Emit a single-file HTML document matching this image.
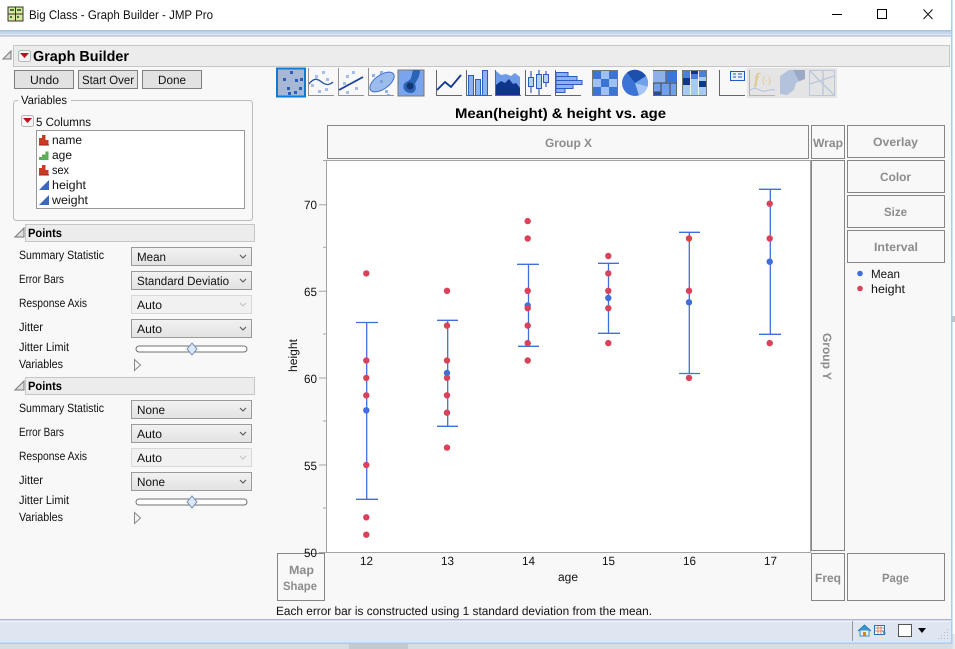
<!DOCTYPE html>
<html><head><meta charset="utf-8"><title>Big Class - Graph Builder - JMP Pro</title>
<style>
html,body{margin:0;padding:0;background:#fff;overflow:hidden}
svg{display:block}
text{font-family:"Liberation Sans",sans-serif;font-size:12px;fill:#111;text-rendering:geometricPrecision}
.b{font-weight:bold;fill:#8c8c8c}
.h{font-weight:bold;fill:#000}
.r{fill:#d9435a}.m{fill:#3f6fdc}
.box{fill:#f8f8f8;stroke:#868686;stroke-width:1}
.dd{fill:url(#dd);stroke:#9a9a9a}
.dis{fill:#f1f1f1;stroke:#d8d8d8}
.e{stroke:#3f6fdc;stroke-width:1.3;fill:none}
.ic{fill:#fff;stroke:none}
.ax{stroke:#666;fill:none}
.blue1{fill:#8db2ee;stroke:#2c5cc0}
.sq{fill:#6f97dc}
</style></head><body>
<svg width="955" height="649" viewBox="0 0 955 649" xmlns="http://www.w3.org/2000/svg">
<defs>
<linearGradient id="dd" x1="0" y1="0" x2="0" y2="1"><stop offset="0" stop-color="#f2f2f2"/><stop offset="1" stop-color="#e2e2e2"/></linearGradient>
<g id="nom"><path d="M0 10V3h3v7zM3 10V0h3.5v10zM6.500 10V5h3v5z" fill="#c93a22"/><path d="M0 10h10" stroke="#8e2615"/></g>
<g id="ord"><path d="M0 10V7h3v3zM3 10V4.500h3.500V10zM6.500 10V1.500h3V10z" fill="#5cad55"/></g>
<g id="con"><path d="M0 10L10 0v10z" fill="#3b68b8"/></g>
<g id="redbtn"><rect x=".5" y=".5" width="12" height="11" rx="2" fill="#f4f4f4" stroke="#b5b5b5"/><path d="M2 3h9l-4.500 5z" fill="#c00c1a"/></g>
<path id="chev" d="M0 0l3 3 3-3" fill="none" stroke="#555" stroke-width="1.100"/>
<g id="slider"><rect x="136" y="-3" width="111" height="6" rx="3" fill="#fff" stroke="#707070"/><path d="M192 -6l5 6-5 6-5-6z" fill="#dbe8f8" stroke="#7a93b8"/></g>
</defs>

<rect width="955" height="649" fill="#fff"/>
<!-- window body -->
<rect x="0" y="30" width="952" height="614" fill="#f8f8f8"/>
<rect x="0" y="30" width="952" height="1.500" fill="#a8c4e4"/>
<rect x="0" y="31.500" width="952" height="2.500" fill="#c5d8ee"/>
<rect x="0" y="34" width="952" height="1.500" fill="#dfe7f2"/>
<rect x="0" y="35.500" width="952" height="1" fill="#a9b6cc"/>
<rect x="951" y="0" width="1.500" height="644" fill="#a6cdf3"/>
<rect x="952.500" y="316" width="2.500" height="6" fill="#c4c4c4"/>
<rect x="0" y="644" width="955" height="5" fill="#dcdcdc"/>
<rect x="349" y="644" width="59" height="5" fill="#c9c9c9"/>
<rect x="952.500" y="634" width="2.500" height="15" fill="#e8e8e8"/>

<!-- title bar -->
<rect x="8" y="7" width="15" height="14" fill="#d9e59a" stroke="#333"/>
<path d="M8 14h15M15.500 7v14" stroke="#333"/>
<path d="M10 10h4M17 10h4M10 17h2M17 17h2" stroke="#3b7a3b" stroke-width="2"/>
<text x="29" y="19" textLength="184" lengthAdjust="spacingAndGlyphs" style="font-size:12.500px">Big Class - Graph Builder - JMP Pro</text>
<path d="M832 14.500h10" stroke="#000"/>
<rect x="877.500" y="9.500" width="9" height="9" fill="none" stroke="#000"/>
<path d="M923.500 9.500l9 9.500M932.500 9.500l-9 9.500" stroke="#111" fill="none"/>

<!-- header -->
<rect x="13.500" y="45.500" width="936" height="21" fill="#ececec" stroke="#c6c6c6"/>
<path d="M11 51v8H3z" fill="#dedede" stroke="#777"/>
<use href="#redbtn" x="18" y="50"/>
<text x="33" y="61" class="h" textLength="96" lengthAdjust="spacingAndGlyphs" style="font-size:14.500px">Graph Builder</text>

<!-- buttons -->
<rect x="14.500" y="70.500" width="59" height="18" fill="#e2e2e2" stroke="#808080"/>
<rect x="78.500" y="70.500" width="59" height="18" fill="#e2e2e2" stroke="#808080"/>
<rect x="142.500" y="70.500" width="59" height="18" fill="#e2e2e2" stroke="#808080"/>
<text x="30" y="84" textLength="29" lengthAdjust="spacingAndGlyphs">Undo</text>
<text x="82" y="84" textLength="52" lengthAdjust="spacingAndGlyphs">Start Over</text>
<text x="158" y="84" textLength="28" lengthAdjust="spacingAndGlyphs">Done</text>

<!-- variables -->
<rect x="13.500" y="100.500" width="239" height="120" rx="3" fill="#f8f8f8" stroke="#bcbcbc"/>
<rect x="18" y="95" width="53" height="10" fill="#f8f8f8"/>
<text x="21" y="104" textLength="46" lengthAdjust="spacingAndGlyphs">Variables</text>
<use href="#redbtn" x="21" y="115"/>
<text x="36" y="126" textLength="55" lengthAdjust="spacingAndGlyphs">5 Columns</text>
<rect x="36.500" y="130.500" width="208" height="78" fill="#fff" stroke="#999"/>
<use href="#nom" x="39" y="135"/><text x="52" y="144" textLength="30" lengthAdjust="spacingAndGlyphs">name</text>
<use href="#ord" x="39" y="150"/><text x="52" y="159" textLength="20" lengthAdjust="spacingAndGlyphs">age</text>
<use href="#nom" x="39" y="165"/><text x="52" y="174" textLength="17" lengthAdjust="spacingAndGlyphs">sex</text>
<use href="#con" x="39" y="180"/><text x="52" y="189" textLength="34" lengthAdjust="spacingAndGlyphs">height</text>
<use href="#con" x="39" y="195"/><text x="52" y="204" textLength="36" lengthAdjust="spacingAndGlyphs">weight</text>

<!-- points 1 -->
<path d="M24 228v9h-9z" fill="#dedede" stroke="#777"/>
<rect x="25.500" y="224.500" width="229" height="17" fill="#ececec" stroke="#c6c6c6"/>
<text x="28" y="237" class="h" textLength="34" lengthAdjust="spacingAndGlyphs">Points</text>
<text x="19" y="259" textLength="85" lengthAdjust="spacingAndGlyphs">Summary Statistic</text>
<text x="19" y="283" textLength="45" lengthAdjust="spacingAndGlyphs">Error Bars</text>
<text x="19" y="307" textLength="68" lengthAdjust="spacingAndGlyphs">Response Axis</text>
<text x="19" y="331" textLength="24" lengthAdjust="spacingAndGlyphs">Jitter</text>
<text x="19" y="351" textLength="50" lengthAdjust="spacingAndGlyphs">Jitter Limit</text>
<text x="19" y="368" textLength="44" lengthAdjust="spacingAndGlyphs">Variables</text>
<rect x="131.500" y="247.500" width="120" height="18" class="dd"/>
<rect x="131.500" y="271.500" width="120" height="18" class="dd"/>
<rect x="131.500" y="295.500" width="120" height="18" class="dis"/>
<rect x="131.500" y="319.500" width="120" height="18" class="dd"/>
<text x="137" y="261" textLength="29" lengthAdjust="spacingAndGlyphs">Mean</text>
<text x="137" y="285" textLength="92" lengthAdjust="spacingAndGlyphs">Standard Deviatio</text>
<text x="137" y="309" textLength="25" lengthAdjust="spacingAndGlyphs">Auto</text>
<text x="137" y="333" textLength="25" lengthAdjust="spacingAndGlyphs">Auto</text>
<use href="#chev" x="240" y="255"/><use href="#chev" x="240" y="279"/>
<use href="#chev" x="240" y="303" opacity=".3"/><use href="#chev" x="240" y="327"/>
<use href="#slider" y="349"/>
<path d="M134.500 359.500v11l6-5.500z" fill="#f4f4f4" stroke="#888"/>

<!-- points 2 -->
<path d="M24 381v9h-9z" fill="#dedede" stroke="#777"/>
<rect x="25.500" y="377.500" width="229" height="17" fill="#ececec" stroke="#c6c6c6"/>
<text x="28" y="390" class="h" textLength="34" lengthAdjust="spacingAndGlyphs">Points</text>
<text x="19" y="412" textLength="85" lengthAdjust="spacingAndGlyphs">Summary Statistic</text>
<text x="19" y="436" textLength="45" lengthAdjust="spacingAndGlyphs">Error Bars</text>
<text x="19" y="460" textLength="68" lengthAdjust="spacingAndGlyphs">Response Axis</text>
<text x="19" y="484" textLength="24" lengthAdjust="spacingAndGlyphs">Jitter</text>
<text x="19" y="504" textLength="50" lengthAdjust="spacingAndGlyphs">Jitter Limit</text>
<text x="19" y="521" textLength="44" lengthAdjust="spacingAndGlyphs">Variables</text>
<rect x="131.500" y="400.500" width="120" height="18" class="dd"/>
<rect x="131.500" y="424.500" width="120" height="18" class="dd"/>
<rect x="131.500" y="448.500" width="120" height="18" class="dis"/>
<rect x="131.500" y="472.500" width="120" height="18" class="dd"/>
<text x="137" y="414" textLength="28" lengthAdjust="spacingAndGlyphs">None</text>
<text x="137" y="438" textLength="25" lengthAdjust="spacingAndGlyphs">Auto</text>
<text x="137" y="462" textLength="25" lengthAdjust="spacingAndGlyphs">Auto</text>
<text x="137" y="486" textLength="28" lengthAdjust="spacingAndGlyphs">None</text>
<use href="#chev" x="240" y="408"/><use href="#chev" x="240" y="432"/>
<use href="#chev" x="240" y="456" opacity=".3"/><use href="#chev" x="240" y="480"/>
<use href="#slider" y="502"/>
<path d="M134.500 512.500v11l6-5.500z" fill="#f4f4f4" stroke="#888"/>

<!-- toolbar -->
<rect x="277" y="68.500" width="28" height="28" fill="#a7b8d6" stroke="#0f7ad8" stroke-width="2"/>
<g fill="#2d5cb8"><rect x="290" y="71" width="3" height="3"/><rect x="283" y="78" width="3" height="3"/><rect x="295" y="79" width="3" height="3"/><rect x="300" y="78" width="3" height="3"/><rect x="287" y="87" width="3" height="3"/><rect x="294" y="91" width="3" height="3"/><rect x="299" y="87" width="3" height="3"/><rect x="288" y="92" width="3" height="3"/></g>
<path d="M308.500 68v27.500H334" class="ax" opacity=".7"/>
<g class="sq" opacity=".6"><rect x="322" y="71" width="3" height="3"/><rect x="315" y="75" width="3" height="3"/><rect x="326" y="78" width="3" height="3"/><rect x="318" y="90" width="3" height="3"/><rect x="325" y="88" width="3" height="3"/><rect x="311" y="84" width="3" height="3"/></g>
<path d="M309 84c6-8 10-4 14-1s8 1 10-1" fill="none" stroke="#2450a8" stroke-width="1.300"/>
<path d="M338.500 68v27.500H364" class="ax" opacity=".7"/>
<g class="sq" opacity=".6"><rect x="352" y="71" width="3" height="3"/><rect x="346" y="75" width="3" height="3"/><rect x="343" y="82" width="3" height="3"/><rect x="355" y="87" width="3" height="3"/><rect x="346" y="91" width="3" height="3"/></g>
<path d="M339 90l24-13" stroke="#1c3f9c" stroke-width="1.800"/>
<path d="M368.500 68v27.500H394" class="ax" opacity=".7"/>
<ellipse cx="382" cy="82" rx="14" ry="7" transform="rotate(-35 382 82)" fill="#9dbcee" stroke="#3f6fd0"/>
<g class="sq" opacity=".7"><rect x="372" y="74" width="3" height="3"/><rect x="380" y="71" width="3" height="3"/><rect x="385" y="90" width="3" height="3"/><rect x="387" y="94" width="3" height="2"/><rect x="380" y="80" width="3" height="3"/></g>
<rect x="398" y="70" width="26" height="26" fill="#7ba4ee" stroke="#777"/>
<path d="M411 93c-6 0-9-5-7-9 2-3 6-3 7-6l2-8h7c0 7-4 11-5 14 2 5 0 9-4 9z" fill="#2a64b5"/>
<circle cx="410" cy="86" r="3.500" fill="#15356e"/>
<path d="M436.500 70v25.500H462" class="ax"/>
<path d="M437 90l8-8 6 5 10-12" fill="none" stroke="#12378f" stroke-width="1.800"/>
<path d="M466.500 70v25.500H492" class="ax"/>
<rect x="468.500" y="75.500" width="5" height="20" class="blue1"/><rect x="475.500" y="79.500" width="5" height="16" class="blue1"/><rect x="482.500" y="70.500" width="5" height="25" class="blue1"/>
<path d="M495.500 70v25.500H521" class="ax"/>
<path d="M496 71l5 4 5-1 5 2 4-3 5 4v18h-24z" fill="#6f9ae6"/>
<path d="M496 85l5-4 4 2 4-4 4 5 3-1 4 5v7h-24z" fill="#0e348c"/>
<path d="M525.500 70v25.500H551" class="ax"/>
<path d="M531 71v22M539 70v25M546 71v16" stroke="#1c3f9c"/>
<rect x="528.500" y="77.500" width="5" height="9" fill="#b9d0f6" stroke="#2c5cc0"/><rect x="536.500" y="74.500" width="5" height="14" fill="#b9d0f6" stroke="#2c5cc0"/><rect x="543.500" y="74.500" width="5" height="8" fill="#b9d0f6" stroke="#2c5cc0"/>
<path d="M555.500 70v25.500H581" class="ax"/>
<rect x="556" y="72.500" width="12" height="4" class="blue1"/><rect x="556" y="76.500" width="21" height="4" class="blue1"/><rect x="556" y="80.500" width="26" height="4" class="blue1"/><rect x="556" y="84.500" width="17" height="4" class="blue1"/><rect x="556" y="88.500" width="9" height="4" class="blue1"/>
<rect x="592.500" y="70.500" width="25" height="25" fill="#9fc0f2" stroke="#777"/>
<path d="M593 71h8v8h-8zM601 79h8v8h-8zM609 71h8v8h-8zM593 87h8v8h-8zM609 87h8v8h-8z" fill="#3b74d4"/>
<circle cx="635" cy="83" r="13" fill="#3b74d4"/>
<path d="M635 83L627 72.500A13 13 0 0 1 646 76z" fill="#1c50ac"/>
<path d="M635 83l11-7a13 13 0 0 1 1.500 10.500z" fill="#6fa0e8"/>
<path d="M635 83l12.500 3.500A13 13 0 0 1 639 95.500z" fill="#a5c6f5"/>
<rect x="653.500" y="70.500" width="23" height="25" fill="#6fa0ee" stroke="#666"/>
<path d="M653 71h13v12h-13z" fill="#8db0e8"/><path d="M667 71h10v11h-10z" fill="#3a76d8"/><path d="M654 92h7v3h-7z" fill="#1c50ac"/>
<path d="M666 71v12M653 83h24M661 83v12M670 83v12M654 92h7" stroke="#444" fill="none"/>
<rect x="682.500" y="70.500" width="24" height="25" fill="#a9c9f5" stroke="#777"/>
<path d="M683 71h7v14h-7zM691 71h7v8h-7zM699 71h7v6h-7z" fill="#4a80dc"/><path d="M683 78h7v7h-7zM699 81h7v6h-7zM691 71h7v3h-7z" fill="#0f358f"/>
<path d="M690.500 71v24M698.500 71v24" stroke="#eee"/>
<path d="M719.500 70v25.500H745" class="ax"/>
<rect x="730.500" y="71.500" width="14" height="9" fill="#eaf1fd" stroke="#2456c6"/>
<path d="M733 74h3M733 77h3M738 74h4M738 77h4" stroke="#2456c6"/>
<rect x="747" y="68" width="90" height="30" fill="#e4e4e4"/>
<path d="M749.500 70v25.500H775" stroke="#b5b5b5" fill="none"/>
<text x="754" y="84" style="font-family:'Liberation Serif',serif;font-style:italic;font-size:16px;fill:#dcc98e;font-weight:bold">f</text>
<text x="762" y="83" style="font-size:9px;fill:#dcc98e">(·)</text>
<path d="M750 90c7-5 10 3 16 1s6-1 9-1" fill="none" stroke="#b3c4dd"/>
<path d="M780 76l9-6h16v9l-9 4-2 7-7 5-7-1z" fill="#b4c3dc"/><path d="M793 70h12v9l-6 2z" fill="#9aaac4"/>
<rect x="809.500" y="70.500" width="25" height="25" fill="#e4e4e4" stroke="#b9c6dc"/>
<path d="M810 71l24 24M834 76l-24 8M823 71v24" stroke="#b9c6dc" stroke-width="1.300" fill="none"/>

<!-- title -->
<text x="455" y="118" class="h" textLength="211" lengthAdjust="spacingAndGlyphs" style="font-size:14px">Mean(height) &amp; height vs. age</text>

<!-- plot -->
<rect x="327" y="160.500" width="483" height="391.500" fill="#fff"/>
<path d="M323 160.500H810.500V552.500M326.500 160v392.500H811" fill="none" stroke="#a4a4a4"/>
<path d="M319 204.700h7M319 291.300h7M319 378h7M319 465h7M319 552.500h7M323 247.300h3M323 334h3M323 421h3M323 508h3" stroke="#a4a4a4"/>

<!-- zones -->
<rect x="327.500" y="125.500" width="481" height="33" class="box"/>
<rect x="811.500" y="125.500" width="33" height="33" class="box"/>
<rect x="847.500" y="125.500" width="97" height="32" class="box"/>
<rect x="847.500" y="160.500" width="97" height="32" class="box"/>
<rect x="847.500" y="195.500" width="97" height="32" class="box"/>
<rect x="847.500" y="230.500" width="97" height="32" class="box"/>
<rect x="811.500" y="160.500" width="33" height="390" class="box"/>
<rect x="811.500" y="553.500" width="33" height="47" class="box"/>
<rect x="847.500" y="553.500" width="97" height="47" class="box"/>
<rect x="277.500" y="553.500" width="47" height="47" class="box"/>
<text x="545" y="147" class="b" textLength="47" lengthAdjust="spacingAndGlyphs">Group X</text>
<text x="813" y="147" class="b" textLength="30" lengthAdjust="spacingAndGlyphs">Wrap</text>
<text x="873" y="146" class="b" textLength="45" lengthAdjust="spacingAndGlyphs">Overlay</text>
<text x="880" y="181" class="b" textLength="31" lengthAdjust="spacingAndGlyphs">Color</text>
<text x="884" y="216" class="b" textLength="23" lengthAdjust="spacingAndGlyphs">Size</text>
<text x="874" y="251" class="b" textLength="44" lengthAdjust="spacingAndGlyphs">Interval</text>
<text class="b" transform="translate(823 333) rotate(90)" textLength="47" lengthAdjust="spacingAndGlyphs">Group Y</text>
<text x="815" y="582" class="b" textLength="26" lengthAdjust="spacingAndGlyphs">Freq</text>
<text x="882" y="582" class="b" textLength="27" lengthAdjust="spacingAndGlyphs">Page</text>
<text x="289" y="574" class="b" textLength="25" lengthAdjust="spacingAndGlyphs">Map</text>
<text x="283" y="590" class="b" textLength="34" lengthAdjust="spacingAndGlyphs">Shape</text>

<!-- legend -->
<circle cx="860" cy="273.500" r="2.800" class="m"/><circle cx="860" cy="288.500" r="2.800" class="r"/>
<text x="871" y="278" textLength="29" lengthAdjust="spacingAndGlyphs">Mean</text>
<text x="871" y="293" textLength="34" lengthAdjust="spacingAndGlyphs">height</text>

<!-- axis labels -->
<text x="304" y="209" textLength="13" lengthAdjust="spacingAndGlyphs">70</text>
<text x="304" y="296" textLength="13" lengthAdjust="spacingAndGlyphs">65</text>
<text x="304" y="383" textLength="13" lengthAdjust="spacingAndGlyphs">60</text>
<text x="304" y="470" textLength="13" lengthAdjust="spacingAndGlyphs">55</text>
<text x="304" y="557" textLength="13" lengthAdjust="spacingAndGlyphs">50</text>
<text transform="translate(297 372) rotate(-90)" textLength="33" lengthAdjust="spacingAndGlyphs">height</text>
<text x="360" y="565" textLength="13" lengthAdjust="spacingAndGlyphs">12</text>
<text x="441" y="565" textLength="13" lengthAdjust="spacingAndGlyphs">13</text>
<text x="522" y="565" textLength="13" lengthAdjust="spacingAndGlyphs">14</text>
<text x="602" y="565" textLength="13" lengthAdjust="spacingAndGlyphs">15</text>
<text x="683" y="565" textLength="13" lengthAdjust="spacingAndGlyphs">16</text>
<text x="764" y="565" textLength="13" lengthAdjust="spacingAndGlyphs">17</text>
<text x="558" y="581" textLength="20" lengthAdjust="spacingAndGlyphs">age</text>

<!-- error bars -->
<path class="e" d="M366.700 322.500V499.300M356 322.500h22M356 499.300h22"/>
<path class="e" d="M447.700 320.300V426.300M437 320.300h21M437 426.300h21"/>
<path class="e" d="M528.500 264.300V346.300M517 264.300h22M518 346.300h21"/>
<path class="e" d="M608.500 263.300V333.300M598 263.300h21M598 333.300h22"/>
<path class="e" d="M689.300 232.300V373.500M679 232.300h21M679 373.500h21"/>
<path class="e" d="M770.300 189.300V334.300M759 189.300h22M759 334.300h22"/>

<!-- means -->
<g class="m">
<circle cx="366.300" cy="410.300" r="3.200"/><circle cx="447" cy="373" r="3.200"/><circle cx="527.700" cy="305.500" r="3.200"/>
<circle cx="608.300" cy="298" r="3.200"/><circle cx="689" cy="302.300" r="3.200"/><circle cx="769.700" cy="261.700" r="3.200"/>
</g>
<!-- points -->
<g class="r">
<circle cx="366.300" cy="273.400" r="3.200"/><circle cx="366.300" cy="360.500" r="3.200"/><circle cx="366.300" cy="377.900" r="3.200"/><circle cx="366.300" cy="395.300" r="3.200"/><circle cx="366.300" cy="465" r="3.200"/><circle cx="366.300" cy="517.300" r="3.200"/><circle cx="366.300" cy="534.700" r="3.200"/>
<circle cx="447" cy="290.800" r="3.200"/><circle cx="447" cy="325.600" r="3.200"/><circle cx="447" cy="360.500" r="3.200"/><circle cx="447" cy="377.900" r="3.200"/><circle cx="447" cy="395.300" r="3.200"/><circle cx="447" cy="412.700" r="3.200"/><circle cx="447" cy="447.600" r="3.200"/>
<circle cx="527.700" cy="221.100" r="3.200"/><circle cx="527.700" cy="238.500" r="3.200"/><circle cx="527.700" cy="290.800" r="3.200"/><circle cx="527.700" cy="308.200" r="3.200"/><circle cx="527.700" cy="325.600" r="3.200"/><circle cx="527.700" cy="343.100" r="3.200"/><circle cx="527.700" cy="360.500" r="3.200"/>
<circle cx="608.300" cy="256" r="3.200"/><circle cx="608.300" cy="273.400" r="3.200"/><circle cx="608.300" cy="290.800" r="3.200"/><circle cx="608.300" cy="308.200" r="3.200"/><circle cx="608.300" cy="343.100" r="3.200"/>
<circle cx="689" cy="238.500" r="3.200"/><circle cx="689" cy="290.800" r="3.200"/><circle cx="689" cy="377.900" r="3.200"/>
<circle cx="769.700" cy="203.700" r="3.200"/><circle cx="769.700" cy="238.500" r="3.200"/><circle cx="769.700" cy="343.100" r="3.200"/>
</g>

<!-- note -->
<text x="276" y="615" textLength="376" lengthAdjust="spacingAndGlyphs">Each error bar is constructed using 1 standard deviation from the mean.</text>

<!-- status bar -->
<rect x="0" y="619" width="951" height="1.500" fill="#a9b6d2"/>
<rect x="0" y="620.500" width="951" height="1" fill="#fff"/>
<rect x="0" y="621.500" width="951" height="21" fill="#e0e6f1"/>
<rect x="0" y="642.500" width="952" height="1.500" fill="#a6cdf3"/>
<path d="M852.500 621v20" stroke="#9a9a9a"/>
<path d="M858 631l6.500-6 6.500 6" fill="#3c94c8" stroke="#2a7fb5"/>
<rect x="860" y="630" width="9" height="6" fill="#e9eef5" stroke="#3c94c8"/>
<rect x="863" y="632" width="3" height="4" fill="#c98b1a"/>
<rect x="874.500" y="625.500" width="10" height="9" fill="#fff" stroke="#2d6db0"/>
<path d="M875 628h10M875 631h10M878 625v9M881 625v9" stroke="#d0603e" stroke-width=".7"/>
<path d="M882 630l4 3-2 2z" fill="#2d8ad0"/>
<rect x="898.500" y="624.500" width="13" height="12" fill="#fff" stroke="#555"/>
<path d="M918 628h8l-4 5z" fill="#000"/>
<g fill="#b8bdc8"><rect x="947" y="629" width="1" height="1"/><rect x="944" y="632" width="1" height="1"/><rect x="947" y="632" width="1" height="1"/><rect x="941" y="635" width="1" height="1"/><rect x="944" y="635" width="1" height="1"/><rect x="947" y="635" width="1" height="1"/><rect x="938" y="638" width="1" height="1"/><rect x="941" y="638" width="1" height="1"/><rect x="944" y="638" width="1" height="1"/><rect x="947" y="638" width="1" height="1"/></g>
</svg>
</body></html>
